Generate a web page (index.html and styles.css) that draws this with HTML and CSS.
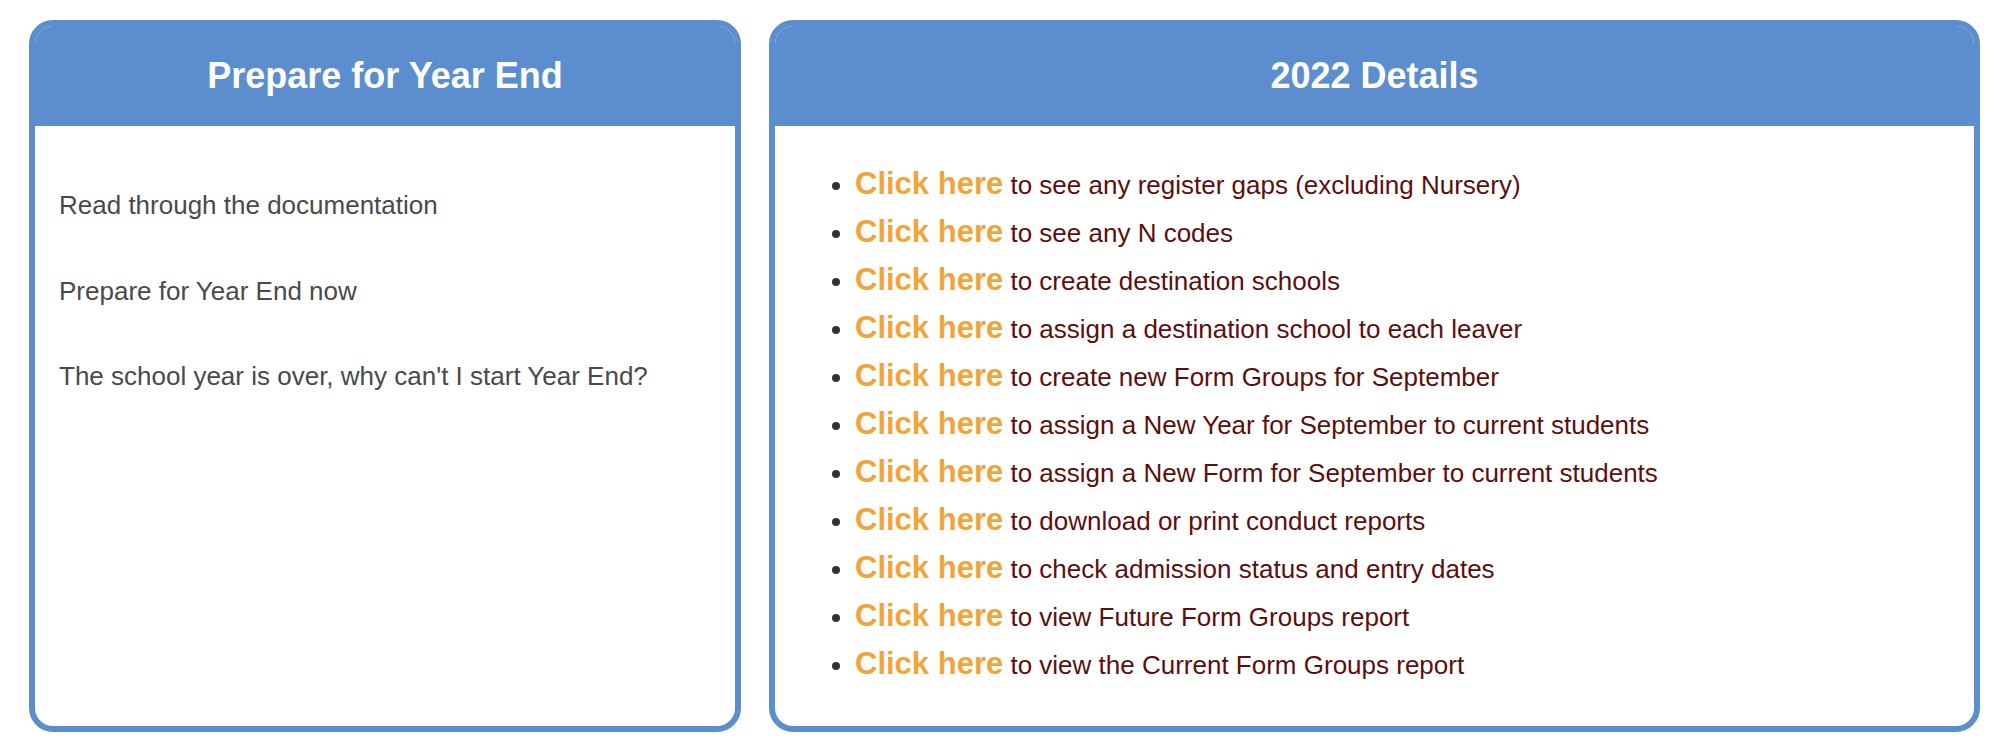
FILE: index.html
```html
<!DOCTYPE html>
<html lang="en">

<head>
	<meta charset="UTF-8">
	<meta name="viewport" content="width=device-width, initial-scale=1.0">
	<title>Year End</title>
	<link rel="stylesheet" href="styles.css">
</head>

<body>
	<div class="yearEnd">
		<div class="yearEnd__card yearEnd__card--side">
			<div class="yearEnd__header">Prepare for Year End</div>
			<div class="yearEnd__body yearEnd__body--links">
				<p>Read through the documentation</p>
				<p>Prepare for Year End now</p>
				<p>The school year is over, why can't I start Year End?</p>
			</div>
		</div>
		<div class="yearEnd__card yearEnd__card--main">
			<div class="yearEnd__header">2022 Details</div>
			<div class="yearEnd__body">
				<ul class="yearEnd__list">
					<li><a href="#" class="clickHere">Click here</a> <span>to see any register gaps (excluding Nursery)</span></li>
					<li><a href="#" class="clickHere">Click here</a> <span>to see any N codes</span></li>
					<li><a href="#" class="clickHere">Click here</a> <span>to create destination schools</span></li>
					<li><a href="#" class="clickHere">Click here</a> <span>to assign a destination school to each leaver</span></li>
					<li><a href="#" class="clickHere">Click here</a> <span>to create new Form Groups for September</span></li>
					<li><a href="#" class="clickHere">Click here</a> <span>to assign a New Year for September to current students</span></li>
					<li><a href="#" class="clickHere">Click here</a> <span>to assign a New Form for September to current students</span></li>
					<li><a href="#" class="clickHere">Click here</a> <span>to download or print conduct reports</span></li>
					<li><a href="#" class="clickHere">Click here</a> <span>to check admission status and entry dates</span></li>
					<li><a href="#" class="clickHere">Click here</a> <span>to view Future Form Groups report</span></li>
					<li><a href="#" class="clickHere">Click here</a> <span>to view the Current Form Groups report</span></li>
				</ul>
			</div>
		</div>
	</div>
</body>

</html>
```

FILE: styles.css
```css
body {
	margin: 0;
	background: #fff;
	font-family: "Liberation Sans", Arial, sans-serif;
}

.yearEnd {
	display: flex;
	gap: 28px;
	padding: 20px 24px 0 29px;
}

.yearEnd__card {
	box-sizing: border-box;
	height: 712px;
	border: 6px solid #5c8ecf;
	border-radius: 24px;
	overflow: hidden;
	background: #fff;
}

.yearEnd__card--side {
	width: 712px;
	flex-shrink: 0;
}

.yearEnd__card--main {
	flex: 1;
}

.yearEnd__header {
	height: 100px;
	display: flex;
	align-items: center;
	justify-content: center;
	background: #5c8ecf;
	color: #fff;
	font-size: 36px;
	font-weight: bold;
}

.yearEnd__body--links {
	padding: 64px 24px 0;
}

.yearEnd__body--links p {
	margin: 0 0 55.5px;
	font-size: 26px;
	line-height: 30px;
	color: #4a4a4a;
}

.yearEnd__list {
	margin: 0;
	padding: 35px 0 0 80px;
	color: #333;
	font-size: 26px;
	line-height: 48px;
}

.yearEnd__list span {
	color: #5e0f0b;
}

.clickHere {
	color: #f0a43c;
	font-size: 31px;
	line-height: 31px;
	font-weight: bold;
	text-decoration: none;
}
```
